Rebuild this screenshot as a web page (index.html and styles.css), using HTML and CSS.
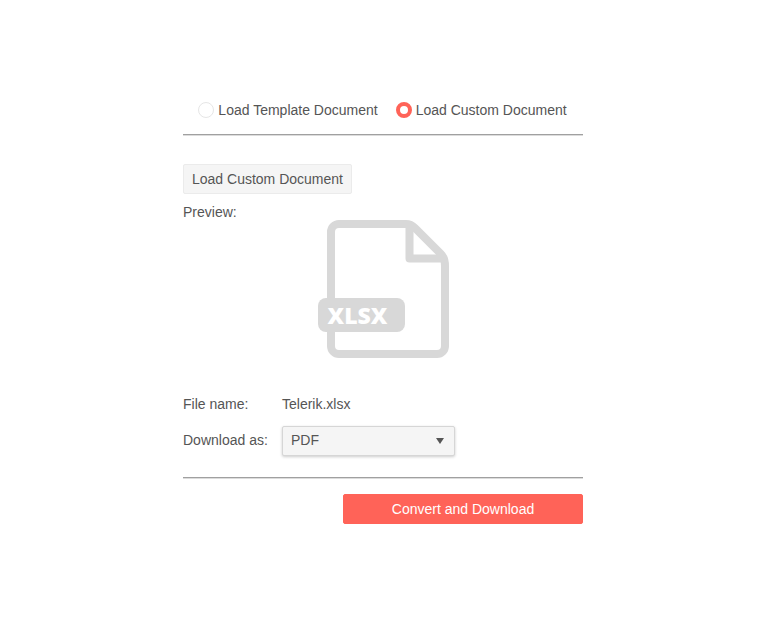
FILE: index.html
```html
<!DOCTYPE html>
<html lang="en">
<head>
<meta charset="utf-8">
<title>Document Converter</title>
<link rel="stylesheet" href="styles.css">
</head>
<body>
<main class="panel">
  <div class="radios">
    <label class="radio"><span class="dot"></span>Load Template Document</label>
    <label class="radio"><span class="dot dot-on"></span>Load Custom Document</label>
  </div>
  <div class="rule rule-top"></div>
  <button class="load" type="button">Load Custom Document</button>
  <div class="preview-label">Preview:</div>
  <div class="preview">
    <svg class="file-icon" width="132" height="140" viewBox="0 0 132 140">
      <path class="doc" d="M21 4H88Q93 4 97 8L123 34Q127 38 127 46V126a8 8 0 0 1-8 8H21a8 8 0 0 1-8-8V12a8 8 0 0 1 8-8Z"/>
      <path class="fold" d="M91.500 6V38.500H125"/>
      <rect class="badge" x="0" y="78" width="87" height="34" rx="8"/>
      <text class="badge-text" x="9.500" y="104">XLSX</text>
    </svg>
  </div>
  <div class="field field-name">
    <span class="field-label">File name:</span>
    <span>Telerik.xlsx</span>
  </div>
  <div class="field field-select">
    <span class="field-label field-label-up">Download as:</span>
    <div class="select"><span class="select-value">PDF</span><span class="arrow"></span></div>
  </div>
  <div class="rule rule-bottom"></div>
  <div class="actions"><button class="convert" type="button">Convert and Download</button></div>
</main>
</body>
</html>
```

FILE: styles.css
```css
* { box-sizing: border-box; }
html, body { margin: 0; padding: 0; background: #fff; }
body {
  font-family: "Liberation Sans", Arial, sans-serif;
  font-size: 14px;
  color: #555;
}
.panel { width: 400px; margin-left: 183px; padding-top: 101px; }
.radios { display: flex; justify-content: center; gap: 18px; height: 18px; padding-right: 1px; }
.radio { display: flex; align-items: center; gap: 4px; line-height: 18px; white-space: nowrap; }
.dot { width: 16px; height: 16px; border-radius: 50%; border: 1px solid #e6e6e6; background: #fff; }
.dot-on { border: 4px solid #ff6358; }
.rule { height: 1px; background: #a0a0a0; box-shadow: 0 1px 0 #dcdcdc; }
.rule-top { margin-top: 15px; }
button { font-family: inherit; font-size: 14px; cursor: pointer; }
.load {
  display: block; margin-top: 29px; width: 169px; height: 30px; padding: 0;
  background: #f5f5f5; color: #555; border: 1px solid #ebebeb; border-radius: 2px;
}
.preview-label { margin-top: 10px; line-height: 16px; }
.preview { display: flex; justify-content: center; padding-left: 2px; height: 140px; }
.file-icon { display: block; }
.doc, .fold { fill: none; stroke: #d8d8d8; stroke-width: 8; stroke-linejoin: round; }
.badge { fill: #d8d8d8; }
.badge-text { fill: #fff; font-family: "Open Sans", sans-serif; font-weight: 800; font-size: 23px; }
.field { display: flex; align-items: center; }
.field-label { width: 99px; }
.field-label-up { padding-bottom: 2px; }
.field-name { margin-top: 36px; line-height: 16px; }
.field-select { margin-top: 14px; }
.select {
  display: flex; align-items: center; justify-content: space-between;
  width: 173px; height: 30px; padding: 0 10px 0 8px;
  background: #f5f5f5; border: 1px solid #d6d6d6; border-radius: 2px;
  box-shadow: 0 1px 3px rgba(0,0,0,.2); font-size: 14px;
}
.select-value { padding-bottom: 2px; }
.arrow { width: 0; height: 0; border-left: 4px solid transparent; border-right: 4px solid transparent; border-top: 6px solid #555; }
.rule-bottom { margin-top: 21px; }
.actions { display: flex; justify-content: flex-end; margin-top: 16px; }
.convert { width: 240px; height: 30px; padding: 0; background: #ff6358; color: #fff; border: 1px solid #ff6358; border-radius: 2px; }
```
